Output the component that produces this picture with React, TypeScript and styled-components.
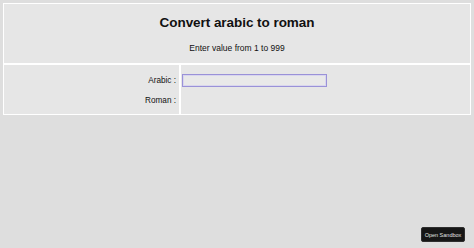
import React, { useState } from 'react'
import styled, { createGlobalStyle } from 'styled-components'

const GlobalStyle = createGlobalStyle`
  html, body {
    margin: 0;
    padding: 0;
    background: #dedede;
    font-family: "Liberation Sans", Arial, sans-serif;
    color: #111;
  }
`

const toRoman = (value: number) => {
  const units = [
    [900, 'CM'], [500, 'D'], [400, 'CD'], [100, 'C'],
    [90, 'XC'], [50, 'L'], [40, 'XL'], [10, 'X'],
    [9, 'IX'], [5, 'V'], [4, 'IV'], [1, 'I'],
  ] as const
  let rest = value
  let out = ''
  units.forEach(([n, s]) => {
    while (rest >= n) {
      out += s
      rest -= n
    }
  })
  return out
}

const App = () => {
  const [arabic, setArabic] = useState<string>('')
  const num = parseInt(arabic, 10)
  const roman = num >= 1 && num <= 999 ? toRoman(num) : ''

  return (
    <>
      <GlobalStyle />
      <Frame>
        <Header>
          <Title>Convert arabic to roman</Title>
          <Hint>Enter value from 1 to 999</Hint>
        </Header>
        <LabelCell>
          <Line>Arabic :</Line>
          <Line>Roman :</Line>
        </LabelCell>
        <FieldCell>
          <Line>
            <Input autoFocus value={arabic} onChange={(e) => setArabic(e.target.value)} />
          </Line>
          <Line>{roman}</Line>
        </FieldCell>
      </Frame>
      <SandboxButton>Open Sandbox</SandboxButton>
    </>
  )
}

const Frame = styled.div`
  margin: 3px 3px 0;
  padding: 1px;
  background: #fff;
  display: grid;
  grid-template-columns: 175px 1fr;
  gap: 2px;
`

const Header = styled.div`
  grid-column: 1 / span 2;
  height: 59px;
  box-sizing: border-box;
  padding-top: 10px;
  background: #e6e6e6;
  text-align: center;
`

const Title = styled.h2`
  margin: 0;
  font-size: 13.5px;
  line-height: 18px;
  font-weight: bold;
  letter-spacing: -0.05px;
`

const Hint = styled.p`
  margin: 10px 0 0;
  font-size: 8.5px;
  line-height: 12px;
`

const Cell = styled.div`
  background: #e6e6e6;
  padding: 5px 3px 4px;
  display: flex;
  flex-direction: column;
`

const LabelCell = styled(Cell)`
  align-items: flex-end;
`

const FieldCell = styled(Cell)`
  padding-left: 1px;
  align-items: flex-start;
`

const Line = styled.div`
  height: 20px;
  display: flex;
  align-items: center;
  font-size: 8.2px;
`

const Input = styled.input`
  width: 145px;
  height: 13px;
  box-sizing: border-box;
  margin: 0;
  padding: 0 2px;
  border: 1px solid #9a92d8;
  box-shadow: inset 0 0 0 1px #d9d6ee;
  background: #e9e9e9;
  font-size: 8px;
  outline: none;
`

const SandboxButton = styled.button`
  position: fixed;
  right: 9px;
  bottom: 6px;
  width: 44px;
  height: 15px;
  padding: 0;
  border: 1px solid #2e2e2e;
  border-radius: 2px;
  background: #161616;
  color: #e2e2e2;
  font-family: "Liberation Sans", Arial, sans-serif;
  font-size: 5.5px;
  cursor: pointer;
`

export default App
